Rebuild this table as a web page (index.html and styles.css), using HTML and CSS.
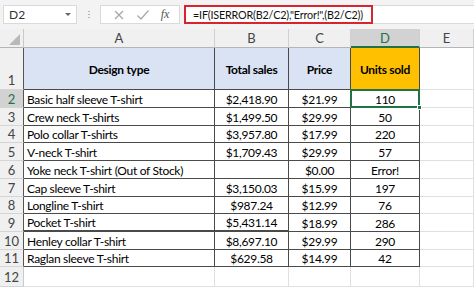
FILE: index.html
```html
<!DOCTYPE html>
<html>
<head>
<meta charset="utf-8">
<link rel="stylesheet" href="styles.css">
</head>
<body>
<div class="app">
  <div class="toolbar">
    <div class="namebox"><span>D2</span><span class="caret"></span></div>
    <div class="grip"><i></i><i></i><i></i></div>
    <div class="iconbox">
      <svg class="ic" width="12" height="12" viewBox="0 0 12 12"><path d="M2 2 L10 10 M10 2 L2 10" stroke="#a6a6a6" stroke-width="1.2" fill="none"/></svg>
      <svg class="ic" width="14" height="12" viewBox="0 0 14 12"><path d="M1.5 6.5 L5 10 L12.5 1.5" stroke="#a6a6a6" stroke-width="1.2" fill="none"/></svg>
      <span class="fx">fx</span>
    </div>
    <div class="formula"><span class="ftext">=IF(ISERROR(B2/C2),"Error!",(B2/C2))</span></div>
  </div>
  <div class="sheet">
    <div class="corner"><span class="tri"></span></div>
    <div class="ch">A</div>
    <div class="ch">B</div>
    <div class="ch">C</div>
    <div class="ch sel">D</div>
    <div class="ch">E</div>

    <div class="rh tb tall">1</div>
    <div class="t hd bold">Design type</div>
    <div class="t hd bold">Total sales</div>
    <div class="t hd bold">Price</div>
    <div class="t gold bold">Units sold</div>
    <div class="g"></div>

    <div class="rh tb rsel">2</div>
    <div class="t a">Basic half sleeve T-shirt</div>
    <div class="t">$2,418.90</div>
    <div class="t">$21.99</div>
    <div class="t active">110<span class="handle"></span></div>
    <div class="g"></div>

    <div class="rh tb">3</div>
    <div class="t a">Crew neck T-shirts</div>
    <div class="t">$1,499.50</div>
    <div class="t">$29.99</div>
    <div class="t">50</div>
    <div class="g"></div>

    <div class="rh tb">4</div>
    <div class="t a">Polo collar T-shirts</div>
    <div class="t">$3,957.80</div>
    <div class="t">$17.99</div>
    <div class="t">220</div>
    <div class="g"></div>

    <div class="rh tb">5</div>
    <div class="t a">V-neck T-shirt</div>
    <div class="t">$1,709.43</div>
    <div class="t">$29.99</div>
    <div class="t">57</div>
    <div class="g"></div>

    <div class="rh tb">6</div>
    <div class="t a">Yoke neck T-shirt (Out of Stock)</div>
    <div class="t"></div>
    <div class="t">$0.00</div>
    <div class="t">Error!</div>
    <div class="g"></div>

    <div class="rh tb">7</div>
    <div class="t a">Cap sleeve T-shirt</div>
    <div class="t">$3,150.03</div>
    <div class="t">$15.99</div>
    <div class="t">197</div>
    <div class="g"></div>

    <div class="rh tb">8</div>
    <div class="t a">Longline T-shirt</div>
    <div class="t">$987.24</div>
    <div class="t">$12.99</div>
    <div class="t">76</div>
    <div class="g"></div>

    <div class="rh tb">9</div>
    <div class="t a thick">Pocket T-shirt</div>
    <div class="t thick">$5,431.14</div>
    <div class="t">$18.99</div>
    <div class="t">286</div>
    <div class="g"></div>

    <div class="rh tb">10</div>
    <div class="t a">Henley collar T-shirt</div>
    <div class="t">$8,697.10</div>
    <div class="t">$29.99</div>
    <div class="t">290</div>
    <div class="g"></div>

    <div class="rh tb">11</div>
    <div class="t a">Raglan sleeve T-shirt</div>
    <div class="t">$629.58</div>
    <div class="t">$14.99</div>
    <div class="t">42</div>
    <div class="g"></div>

    <div class="rh">12</div>
    <div class="g"></div>
    <div class="g"></div>
    <div class="g"></div>
    <div class="g"></div>
    <div class="g"></div>
  </div>
</div>
</body>
</html>
```
FILE: styles.css
```css
html, body {
  margin: 0;
  padding: 0;
  background: #ffffff;
}
body {
  width: 474px;
  height: 287px;
  overflow: hidden;
  font-family: "Lato", "Open Sans", sans-serif;
  color: #000;
}
.app {
  display: flex;
  flex-direction: column;
  height: 287px;
}
.toolbar {
  height: 29px;
  flex: none;
  background: #f3f3f3;
  display: flex;
  align-items: flex-start;
  padding-top: 5px;
  box-sizing: border-box;
  padding-left: 3px;
}
.namebox {
  width: 74px;
  height: 19px;
  box-sizing: border-box;
  background: #fff;
  border: 1px solid #dadada;
  display: flex;
  align-items: center;
  justify-content: space-between;
  padding: 0 5px 0 5px;
  font-size: 12px;
  color: #333;
}
.caret {
  width: 0;
  height: 0;
  border-left: 3px solid transparent;
  border-right: 3px solid transparent;
  border-top: 3px solid #666;
}
.grip {
  width: 23px;
  height: 19px;
  display: flex;
  flex-direction: column;
  align-items: center;
  justify-content: center;
  gap: 2px;
}
.grip i {
  width: 2px;
  height: 1px;
  background: #b5b5b5;
}
.iconbox {
  width: 80px;
  height: 19px;
  box-sizing: border-box;
  background: #fff;
  border: 1px solid #dadada;
  display: flex;
  align-items: center;
  justify-content: space-around;
  padding: 0 4px 0 6px;
}
.fx {
  font-family: "Liberation Serif", serif;
  font-style: italic;
  font-size: 12px;
  color: #555;
}
.formula {
  flex: 1;
  height: 19px;
  margin-left: 4px;
  background: #fff;
  border-top: 1px solid #dadada;
  border-bottom: 1px solid #dadada;
  box-sizing: border-box;
  position: relative;
}
.ftext {
  position: absolute;
  left: 0;
  top: -1px;
  width: 189px;
  height: 19px;
  box-sizing: border-box;
  border: 2px solid #d8242c;
  font-size: 10.8px;
  letter-spacing: -0.2px;
  line-height: 15px;
  padding-left: 7px;
  white-space: nowrap;
  color: #111;
}
.sheet {
  flex: 1;
  display: grid;
  grid-template-columns: 24px 191px 74px 62px 69px 1fr;
  grid-template-rows: 19px 42px 18px 18px 17px 18px 18px 18px 17px 18px 18px 17px 1fr;
  font-size: 12px;
  letter-spacing: -0.3px;
}
.sheet > div {
  box-sizing: border-box;
  border-right: 1px solid #e0e0e0;
  border-bottom: 1px solid #e0e0e0;
  display: flex;
  align-items: center;
  justify-content: center;
  white-space: nowrap;
  overflow: hidden;
}
.corner {
  background: #f0f0f0;
  position: relative;
  border-bottom-color: #b5b5b5 !important;
  border-right-color: #c9c9c9 !important;
}
.tri {
  position: absolute;
  right: 3px;
  bottom: 2px;
  width: 0;
  height: 0;
  border-left: 11px solid transparent;
  border-bottom: 11px solid #b9b9b9;
}
.ch {
  background: #f0f0f0;
  color: #444;
  font-size: 13px;
  letter-spacing: 0;
  border-bottom-color: #b5b5b5 !important;
  border-right-color: #d0d0d0 !important;
}
.ch.sel {
  background: #d2d2d2;
  color: #217346;
  border-bottom: 2px solid #217346 !important;
}
.rh {
  background: #f0f0f0;
  color: #444;
  font-size: 13px;
  letter-spacing: 0;
  border-right-color: #c9c9c9 !important;
  border-bottom-color: #d4d4d4 !important;
}
.rh.tb {
  border-right-color: #555 !important;
}
.rh.tall {
  align-items: flex-end;
  padding-bottom: 1px;
}
.rh.rsel {
  background: #d2d2d2;
  color: #217346;
}
.t {
  border-right-color: #4a4a4a !important;
  border-bottom-color: #4a4a4a !important;
  padding-top: 1px;
}
.t.a {
  justify-content: flex-start;
  padding-left: 3px;
}
.t.thick {
  border-bottom-width: 2px !important;
}
.hd {
  background: #dae3f3;
}
.gold {
  background: #ffc000;
}
.bold {
  font-weight: bold;
}
.active {
  position: relative;
  overflow: visible !important;
}
.active::after {
  content: "";
  position: absolute;
  left: -1px;
  top: -1px;
  right: -1px;
  bottom: -1px;
  border: 2px solid #217346;
}
.handle {
  position: absolute;
  right: -3px;
  bottom: -3px;
  width: 5px;
  height: 5px;
  background: #217346;
  border: 1px solid #fff;
  box-sizing: border-box;
  z-index: 2;
}
```
